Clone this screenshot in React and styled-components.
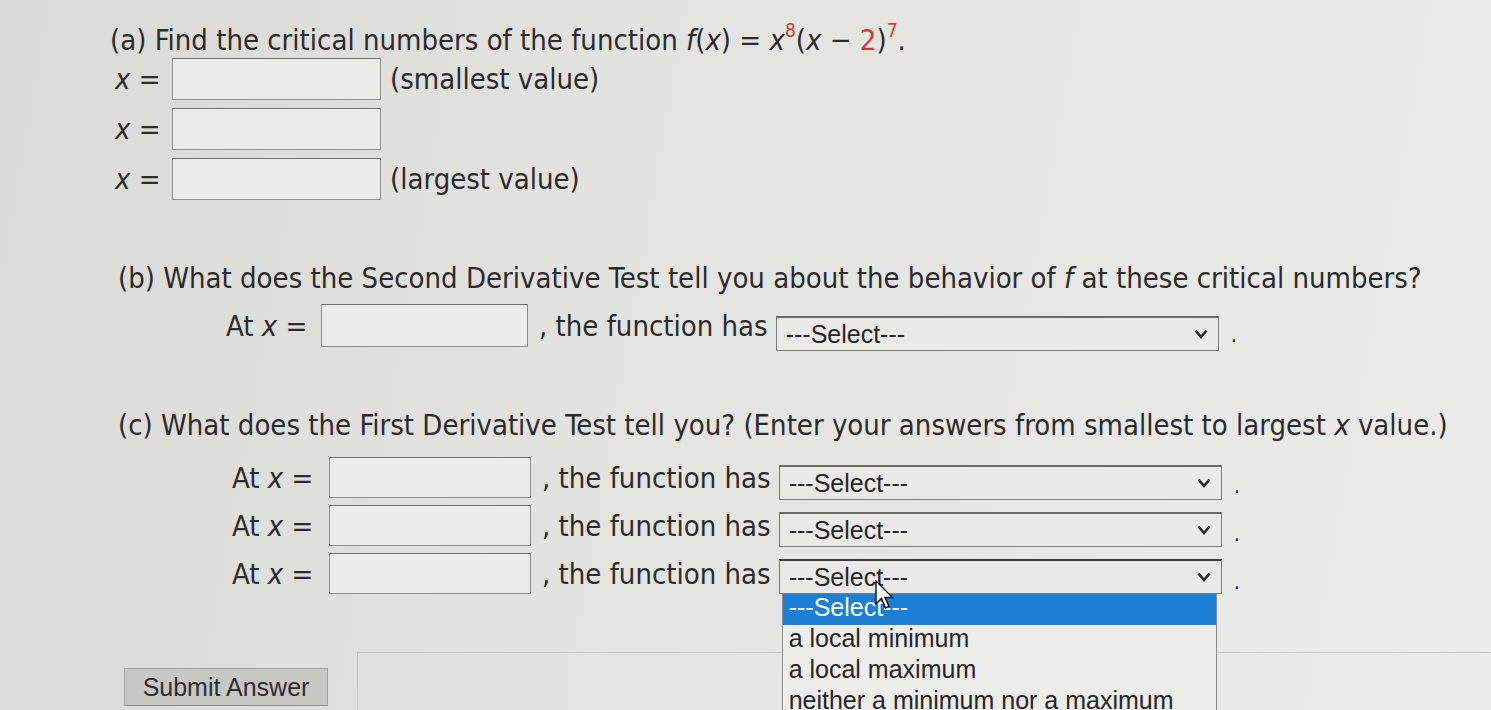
import React from 'react'
import styled, { createGlobalStyle } from 'styled-components'

const GlobalStyle = createGlobalStyle`
  html, body {
    margin: 0;
    padding: 0;
    height: 710px;
    overflow: hidden;
  }
  body {
    background: linear-gradient(100deg, #d9d9d6 0%, #e3e3e0 45%, #ebebe9 100%);
    color: #2b2b2b;
    font-family: 'DejaVu Sans Condensed', 'DejaVu Sans', sans-serif;
    font-stretch: condensed;
  }
`

const Page = styled.div`
  padding: 22px 0 0 110px;
  font-size: 29px;
`

const Heading = styled.p`
  margin: ${props => props.mt || 0}px 0 0 ${props => props.ml || 0}px;
  line-height: 36px;
  white-space: nowrap;
`

const Var = styled.i`
  font-style: italic;
`

const Red = styled.span`
  color: #cf3b32;
`

const Sup = styled.sup`
  font-size: 19px;
  line-height: 0;
  vertical-align: 13px;
`

const Rows = styled.div`
  display: flex;
  flex-direction: column;
  gap: ${props => props.gap}px;
  margin: ${props => props.mt}px 0 0 ${props => props.ml}px;
`

const Row = styled.div`
  display: flex;
  align-items: center;
  white-space: nowrap;
`

const Label = styled.span`
  width: ${props => props.w}px;
  flex: none;
`

const Input = styled.div`
  width: ${props => props.w}px;
  height: ${props => props.h}px;
  box-sizing: border-box;
  border: 1px solid #8e8e8c;
  border-top-color: #6f6f6d;
  background: #ebebe9;
  flex: none;
`

const Note = styled.span`
  margin-left: 9px;
`

const Has = styled.span`
  margin: 0 8px 0 11px;
`

const SelectWrap = styled.div`
  position: relative;
  align-self: flex-end;
  margin-bottom: ${props => props.drop}px;
`

const SelectBox = styled.div`
  width: ${props => props.w}px;
  height: 35px;
  box-sizing: border-box;
  border: 1px solid #7b7b79;
  border-top: 2px solid ${props => (props.open ? '#3a3a3a' : '#6a6a68')};
  background: #e9e9e7;
  display: flex;
  align-items: center;
  justify-content: space-between;
  padding: 0 10px 0 9px;
  font-family: 'Liberation Sans', Arial, sans-serif;
  font-size: 25px;
  color: #262626;
`

const Dot = styled.span`
  margin-left: 12px;
  font-size: 22px;
  align-self: flex-end;
`

const DropList = styled.div`
  position: absolute;
  top: 100%;
  left: 3px;
  right: 5px;
  background: #ececea;
  border: 1px solid #8a8a88;
  border-top: none;
  font-family: 'Liberation Sans', Arial, sans-serif;
  font-size: 25px;
  color: #262626;
  z-index: 5;
`

const Option = styled.div`
  height: 31px;
  line-height: 27px;
  padding: 0 6px;
  background: ${props => (props.active ? '#1c7fd6' : 'transparent')};
  color: ${props => (props.active ? '#ffffff' : '#262626')};
`

const Cursor = styled.svg`
  position: absolute;
  left: 96px;
  top: 21px;
  z-index: 6;
`

const Footer = styled.div`
  display: flex;
  align-items: flex-start;
  margin: 58px 0 0 14px;
`

const SubmitButton = styled.button`
  margin-top: 16px;
  width: 204px;
  height: 38px;
  background: #c7c7c5;
  border: 1px solid #a2a2a0;
  border-bottom-color: #8d8d8b;
  font-family: 'Liberation Sans', Arial, sans-serif;
  font-size: 25px;
  color: #2e2e2e;
  padding: 0;
  flex: none;
`

const Pane = styled.div`
  margin-left: 29px;
  flex: 1;
  height: 80px;
  border-top: 1px solid #c6c6c4;
  border-left: 1px solid #c6c6c4;
`

const Chevron = () => (
  <svg width="14" height="10" viewBox="0 0 14 10">
    <polyline
      points="1.5,1.5 7,8 12.5,1.5"
      fill="none"
      stroke="#2a2a2a"
      strokeWidth="2.6"
    />
  </svg>
)

const options = [
  '---Select---',
  'a local minimum',
  'a local maximum',
  'neither a minimum nor a maximum'
]

const Select = ({ w, open, drop }) => (
  <SelectWrap drop={drop}>
    <SelectBox w={w} open={open}>
      <span>---Select---</span>
      <Chevron />
    </SelectBox>
    {open && (
      <>
        <DropList>
          {options.map((o, i) => (
            <Option key={o} active={i === 0}>
              {o}
            </Option>
          ))}
        </DropList>
        <Cursor width="22" height="32" viewBox="0 0 22 32">
          <path
            d="M1 1 L1 24 L6.5 18.5 L10.5 28 L14 26.5 L10 17.5 L17.5 17.5 Z"
            fill="#ffffff"
            stroke="#111111"
            strokeWidth="1.4"
          />
        </Cursor>
      </>
    )}
  </SelectWrap>
)

const TestRow = ({ open, labelW, inputW, inputH, drop }) => (
  <Row>
    <Label w={labelW}>
      At <Var>x</Var> =
    </Label>
    <Input w={inputW} h={inputH} />
    <Has>, the function has</Has>
    <Select w={443} open={open} drop={drop} />
    <Dot>.</Dot>
  </Row>
)

const App = () => (
  <>
    <GlobalStyle />
    <Page>
      <Heading>
        (a) Find the critical numbers of the function <Var>f</Var>(<Var>x</Var>) ={' '}
        <Var>x</Var>
        <Sup>
          <Red>8</Red>
        </Sup>
        (<Var>x</Var> − <Red>2</Red>)
        <Sup>
          <Red>7</Red>
        </Sup>
        .
      </Heading>
      <Rows gap={8} mt={0} ml={5}>
        <Row>
          <Label w={57}>
            <Var>x</Var> =
          </Label>
          <Input w={209} h={42} />
          <Note>(smallest value)</Note>
        </Row>
        <Row>
          <Label w={57}>
            <Var>x</Var> =
          </Label>
          <Input w={209} h={42} />
        </Row>
        <Row>
          <Label w={57}>
            <Var>x</Var> =
          </Label>
          <Input w={209} h={42} />
          <Note>(largest value)</Note>
        </Row>
      </Rows>

      <Heading mt={60} ml={8}>
        (b) What does the Second Derivative Test tell you about the behavior of <Var>f</Var> at these
        critical numbers?
      </Heading>
      <Rows gap={0} mt={8} ml={116}>
        <TestRow labelW={95} inputW={207} inputH={43} drop={-4} />
      </Rows>

      <Heading mt={60} ml={8}>
        (c) What does the First Derivative Test tell you? (Enter your answers from smallest to largest{' '}
        <Var>x</Var> value.)
      </Heading>
      <Rows gap={7} mt={14} ml={122}>
        <TestRow labelW={97} inputW={202} inputH={41} drop={-2} />
        <TestRow labelW={97} inputW={202} inputH={41} drop={-1} />
        <TestRow labelW={97} inputW={202} inputH={41} drop={0} open />
      </Rows>

      <Footer>
        <SubmitButton>Submit Answer</SubmitButton>
        <Pane />
      </Footer>
    </Page>
  </>
)

export default App
